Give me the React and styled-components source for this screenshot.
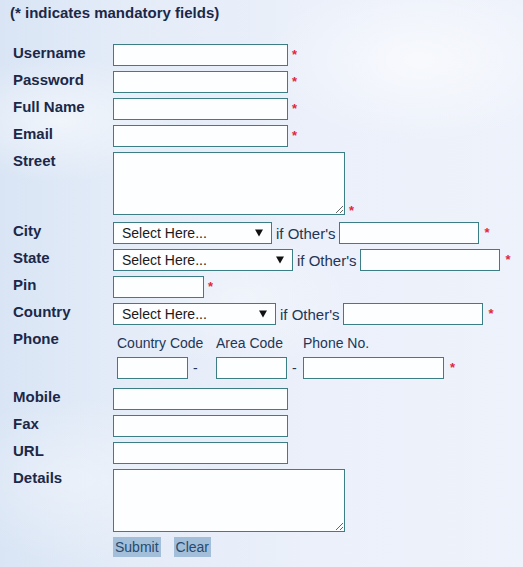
import React from "react";
import styled, { createGlobalStyle } from "styled-components";

const GlobalStyle = createGlobalStyle`
  html, body { margin: 0; padding: 0; }
  body {
    width: 523px;
    height: 567px;
    overflow: hidden;
    font-family: "Liberation Sans", Arial, sans-serif;
    background:
      radial-gradient(ellipse 180px 90px at 60px 120px, rgba(255,255,255,0.55), rgba(255,255,255,0) 70%),
      radial-gradient(ellipse 220px 120px at 420px 60px, rgba(255,255,255,0.6), rgba(255,255,255,0) 70%),
      radial-gradient(ellipse 160px 100px at 240px 300px, rgba(255,255,255,0.35), rgba(255,255,255,0) 70%),
      radial-gradient(ellipse 200px 120px at 80px 480px, rgba(255,255,255,0.35), rgba(255,255,255,0) 70%),
      linear-gradient(90deg, #d9e5f5 0%, #e4ecf8 25%, #ebf0fa 60%, #eef2fb 100%);
  }
`;

const Page = styled.div`
  padding: 5px 0 0 10px;
`;

const Title = styled.div`
  font-size: 15px;
  font-weight: bold;
  line-height: 16px;
  color: #1b2848;
`;

const Form = styled.form`
  display: flex;
  flex-direction: column;
  gap: 5px;
  margin: 23px 0 0 3px;
`;

const Row = styled.div`
  display: flex;
  height: ${(p) => p.$h || 22}px;
`;

const Label = styled.div`
  width: 100px;
  flex: none;
  padding-top: 1px;
  font-size: 15px;
  font-weight: bold;
  line-height: 16px;
  color: #1b2848;
`;

const Field = styled.div`
  display: flex;
  align-items: ${(p) => (p.$bottom ? "flex-start" : "center")};
`;

const TextInput = styled.input`
  box-sizing: border-box;
  width: ${(p) => p.$w || 175}px;
  height: 22px;
  margin: 0;
  padding: 1px 3px;
  border: 1px solid #3b7e86;
  background: #fdfeff;
  font-family: "Liberation Sans", Arial, sans-serif;
  font-size: 14px;
  outline: none;
`;

const TextArea = styled.textarea`
  box-sizing: border-box;
  width: 232px;
  height: 63px;
  margin: 0;
  padding: 2px;
  border: 1px solid #3b7e86;
  background: #fdfeff;
  font-family: "Liberation Sans", Arial, sans-serif;
  font-size: 14px;
  outline: none;
`;

const Star = styled.span`
  color: #e0283e;
  font-size: 13px;
  font-weight: bold;
  line-height: 13px;
  height: 13px;
  margin-left: ${(p) => (p.$ml != null ? p.$ml : 4)}px;
  align-self: ${(p) => (p.$bottom ? "flex-end" : "center")};
  margin-top: ${(p) => (p.$bottom ? 0 : -2)}px;
  margin-bottom: 0;
`;

const SelectWrap = styled.div`
  position: relative;
  width: ${(p) => p.$w}px;
  height: 22px;
  flex: none;
`;

const Select = styled.select`
  box-sizing: border-box;
  appearance: none;
  -webkit-appearance: none;
  width: 100%;
  height: 22px;
  margin: 0;
  padding: 0 0 0 8px;
  border: 1px solid #3b7e86;
  border-radius: 0;
  background: #fdfeff;
  color: #1a1a1a;
  font-family: "Liberation Sans", Arial, sans-serif;
  font-size: 14px;
  outline: none;
`;

const Arrow = styled.svg`
  position: absolute;
  right: 9px;
  top: 7px;
  pointer-events: none;
`;

const OtherText = styled.span`
  font-size: 15px;
  color: #243556;
  margin: 0 3px 0 4px;
  white-space: nowrap;
`;

const PhoneGrid = styled.div`
  display: flex;
  padding: 5px 0 0 4px;
`;

const PhoneCol = styled.div`
  width: ${(p) => (p.$w ? `${p.$w}px` : "auto")};
  display: flex;
  flex-direction: column;
  gap: 6px;
`;

const SubLabel = styled.div`
  font-size: 14px;
  line-height: 16px;
  color: #243556;
  white-space: nowrap;
`;

const PhoneLine = styled.div`
  display: flex;
  align-items: center;
`;

const Dash = styled.span`
  font-size: 14px;
  color: #243556;
  margin-left: 5px;
`;

const Buttons = styled.div`
  display: flex;
  gap: 13px;
  margin-left: 100px;
`;

const Button = styled.button`
  height: 20px;
  margin: 0;
  padding: 0 2px;
  border: none;
  border-radius: 0;
  background: #a3bed8;
  color: #274a6f;
  font-family: "Liberation Sans", Arial, sans-serif;
  font-size: 14px;
  line-height: 20px;
  cursor: pointer;
`;

const ArrowIcon = () => (
  <Arrow width="8" height="8" viewBox="0 0 8 8">
    <path d="M0 0.5 L8 0.5 L4 7.5 Z" fill="#111" />
  </Arrow>
);

const SelectField = ({ w }) => (
  <SelectWrap $w={w}>
    <Select defaultValue="">
      <option value="">Select Here...</option>
    </Select>
    <ArrowIcon />
  </SelectWrap>
);

const InputRow = ({ label, w, star }) => (
  <Row>
    <Label>{label}</Label>
    <Field>
      <TextInput type="text" $w={w} />
      {star && <Star>*</Star>}
    </Field>
  </Row>
);

const SelectRow = ({ label, selectW }) => (
  <Row>
    <Label>{label}</Label>
    <Field>
      <SelectField w={selectW} />
      <OtherText>if Other's</OtherText>
      <TextInput type="text" $w={140} />
      <Star $ml={6}>*</Star>
    </Field>
  </Row>
);

export default function App() {
  return (
    <>
      <GlobalStyle />
      <Page>
        <Title>(* indicates mandatory fields)</Title>
        <Form onSubmit={(e) => e.preventDefault()}>
          <InputRow label="Username" star />
          <InputRow label="Password" star />
          <InputRow label="Full Name" star />
          <InputRow label="Email" star />
          <Row $h={65}>
            <Label>Street</Label>
            <Field $bottom>
              <TextArea />
              <Star $bottom $ml={4}>*</Star>
            </Field>
          </Row>
          <SelectRow label="City" selectW={159} />
          <SelectRow label="State" selectW={180} />
          <InputRow label="Pin" w={91} star />
          <SelectRow label="Country" selectW={163} />
          <Row $h={53}>
            <Label>Phone</Label>
            <PhoneGrid>
              <PhoneCol $w={99}>
                <SubLabel>Country Code</SubLabel>
                <PhoneLine>
                  <TextInput type="text" $w={71} />
                  <Dash>-</Dash>
                </PhoneLine>
              </PhoneCol>
              <PhoneCol $w={87}>
                <SubLabel>Area Code</SubLabel>
                <PhoneLine>
                  <TextInput type="text" $w={71} />
                  <Dash>-</Dash>
                </PhoneLine>
              </PhoneCol>
              <PhoneCol>
                <SubLabel>Phone No.</SubLabel>
                <PhoneLine>
                  <TextInput type="text" $w={141} />
                  <Star $ml={6}>*</Star>
                </PhoneLine>
              </PhoneCol>
            </PhoneGrid>
          </Row>
          <InputRow label="Mobile" />
          <InputRow label="Fax" />
          <InputRow label="URL" />
          <Row $h={63}>
            <Label>Details</Label>
            <Field $bottom>
              <TextArea />
            </Field>
          </Row>
          <Buttons>
            <Button type="submit">Submit</Button>
            <Button type="reset">Clear</Button>
          </Buttons>
        </Form>
      </Page>
    </>
  );
}
